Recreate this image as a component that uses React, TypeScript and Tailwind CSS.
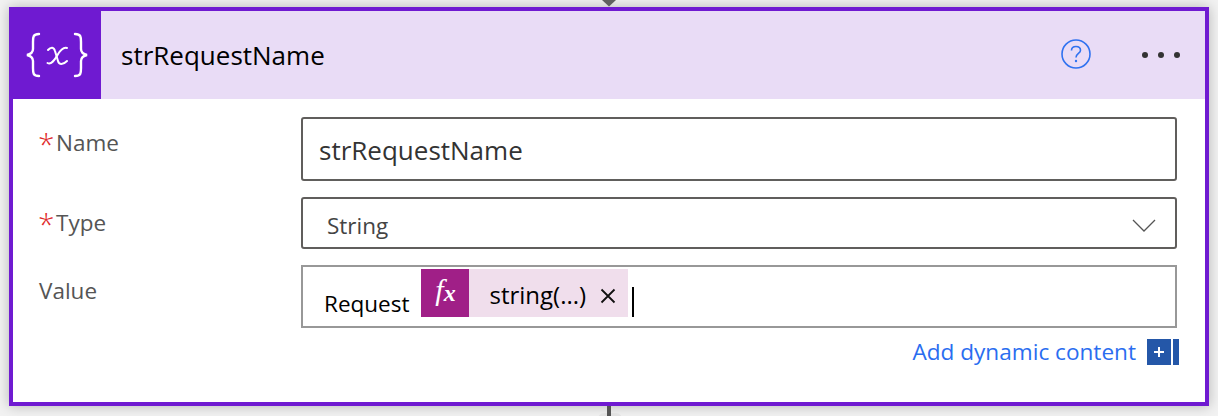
const FONT = "font-['Open_Sans','Noto_Sans',sans-serif]"

function Field({ label, required, children, height }: { label: string; required?: boolean; children: React.ReactNode; height: string }) {
  return (
    <div className={`flex ${height}`}>
      <div className="w-[265px] shrink-0 flex items-start pl-[3px] pt-[12px] text-[22.5px] leading-[28px] text-[#555555]">
        {required && (
          <span className="text-[#e02b2b] w-[18px] shrink-0 text-[30px] leading-[28px] font-light mt-[1px] -ml-[1px]">*</span>
        )}
        <span>{label}</span>
      </div>
      {children}
    </div>
  )
}

export default function App() {
  return (
    <div className={`w-[1218px] h-[416px] bg-[#f2f2f2] overflow-hidden relative ${FONT}`}>
      {/* top connector arrow */}
      <svg className="absolute left-[601px] top-0" width="16" height="7" viewBox="0 0 16 7">
        <path d="M1 0H15L8 6.5Z" fill="#606060" />
      </svg>

      <div className="pt-[7px] pl-[9px]">
        <div className="w-[1200px] h-[399px] border-4 border-[#6f1ad1] bg-white shadow-[0_0_12px_rgba(0,0,0,0.25)] flex flex-col">
          {/* Header */}
          <div className="h-[88px] shrink-0 bg-[#e9dcf6] flex items-center">
            <div className="w-[88px] h-[88px] bg-[#6f1ad1] flex items-center justify-center shrink-0">
              <svg width="64" height="48" viewBox="0 0 64 48" fill="none" stroke="#ffffff" strokeWidth="2.4" strokeLinecap="round">
                <path d="M14 3C8 3 8 6 8 11V18C8 21 6 23 2 24C6 25 8 27 8 30V37C8 42 8 45 14 45" />
                <path d="M50 3C56 3 56 6 56 11V18C56 21 58 23 62 24C58 25 56 27 56 30V37C56 42 56 45 50 45" />
                <path d="M23 19C26 15.500 29 16 30 20L33 30C34 34 38 34 42 30" strokeWidth="2" />
                <path d="M42 17C39 16 36 18 32.500 24C29 30 26 34 22.500 32" strokeWidth="2" />
              </svg>
            </div>
            <span className="ml-5 mt-[1px] text-[26px] text-black">strRequestName</span>
            <div className="ml-auto flex items-center">
              <svg width="30" height="30" viewBox="0 0 30 30" fill="none" className="mr-[51px] -mt-[2px]">
                <circle cx="15" cy="15" r="14" stroke="#2f72f0" strokeWidth="1.6" />
                <path d="M10.500 11.500C10.500 8.800 12.600 7.500 15 7.500C17.500 7.500 19.500 9 19.500 11.300C19.500 14.500 15 14.500 15 18.500" stroke="#2f72f0" strokeWidth="1.6" />
                <circle cx="15" cy="22" r="1.2" fill="#2f72f0" />
              </svg>
              <div className="flex gap-[10px] mr-[25px]">
                <span className="w-[6px] h-[6px] rounded-full bg-[#333333]" />
                <span className="w-[6px] h-[6px] rounded-full bg-[#333333]" />
                <span className="w-[6px] h-[6px] rounded-full bg-[#333333]" />
              </div>
            </div>
          </div>

          {/* Form */}
          <div className="pl-[23px] pr-[28px] pt-[18px] flex flex-col">
            <Field label="Name" required height="h-[80px]">
              <div className="w-[876px] h-[64px] border-2 border-[#605e5c] rounded-[3px] flex items-center pl-[16px] pt-[3px] text-[26px] text-[#333333]">
                strRequestName
              </div>
            </Field>
            <Field label="Type" required height="h-[68px]">
              <div className="w-[876px] h-[52px] border-2 border-[#605e5c] rounded-[3px] flex items-center justify-between pl-[24px] pr-[19px] text-[22.5px] text-[#444444]">
                <span className="mt-[6px]">String</span>
                <svg width="24" height="14" viewBox="0 0 24 14" fill="none" stroke="#555555" strokeWidth="1.3" className="mt-[5px]">
                  <path d="M1 1L12 12L23 1" />
                </svg>
              </div>
            </Field>
            <Field label="Value" height="h-[63px]">
              <div className="w-[876px] h-[63px] border-2 border-[#989898] flex items-start pl-[21px] pt-[2px] text-[22.5px] text-black">
                <span className="mt-[21px] leading-[28px]">Request</span>
                <div className="ml-[12px] h-[48px] flex items-center bg-[#f0deec]">
                  <div className="w-[48px] h-[48px] bg-[#a01f87] flex items-center justify-center text-white font-['Liberation_Serif',serif] italic text-[30px] leading-none pb-[6px]">
                    <span>f</span><span className="text-[24px] mt-[5px] font-semibold">x</span>
                  </div>
                  <span className="ml-[20px] text-[24px] mt-[3px]">string(...)</span>
                  <svg width="16" height="16" viewBox="0 0 16 16" fill="none" stroke="#111111" strokeWidth="1.8" className="ml-[14px] mr-[12px] mt-[6px]">
                    <path d="M1.500 1.500L14.500 14.500M14.500 1.500L1.500 14.500" />
                  </svg>
                </div>
                <div className="ml-[4px] mt-[18px] w-[2px] h-[30px] bg-black" />
              </div>
            </Field>
            <div className="flex justify-end items-center mt-[10px] -mr-[2px]">
              <span className="text-[#2a6df0] text-[22.6px] leading-[26px] mt-[1px]">Add dynamic content</span>
              <div className="ml-[11px] w-[24px] h-[26px] bg-[#2457a8] flex items-center justify-center text-white">
                <svg width="12" height="12" viewBox="0 0 12 12" stroke="#ffffff" strokeWidth="2">
                  <path d="M6 1V11M1 6H11" />
                </svg>
              </div>
              <div className="ml-[2px] w-[6px] h-[26px] bg-[#2457a8]" />
            </div>
          </div>
        </div>
      </div>

      {/* bottom connector */}
      <div className="absolute left-[598px] top-[413px] w-[24px] h-[12px] rounded-full bg-[#e2e2e2]" />
      <div className="absolute left-[607px] top-[406px] w-[4px] h-[10px] bg-[#555555]" />
    </div>
  )
}
